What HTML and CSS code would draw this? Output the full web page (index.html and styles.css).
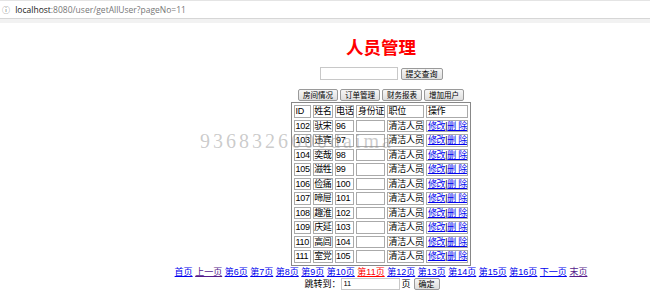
FILE: index.html
```html
<!DOCTYPE html>
<html>
<head>
<meta charset="utf-8">
<link rel="stylesheet" href="styles.css">
</head>
<body>
<div class="chrome">
  <span class="info">&#9432;</span>
  <span class="host">localhost</span><span class="path">:8080/user/getAllUser?pageNo=11</span>
</div>
<div class="chrome-gap"></div>
<div class="page">
  <h1 class="title">人员管理</h1>
  <form class="search">
    <input class="search-input" type="text"><button class="btn" type="button">提交查询</button>
  </form>
  <div class="menu">
    <button class="btn" type="button">房间情况</button>
    <button class="btn" type="button">订单管理</button>
    <button class="btn" type="button">财务报表</button>
    <button class="btn" type="button">增加用户</button>
  </div>
  <table class="users">
    <tr><td>ID</td><td>姓名</td><td>电话</td><td>身份证</td><td>职位</td><td>操作</td></tr>
    <tr><td>102</td><td>驮宋</td><td>96</td><td></td><td>清洁人员</td><td><a href="#">修改</a>|<a href="#">删 除</a></td></tr>
    <tr><td>103</td><td>违宾</td><td>97</td><td></td><td>清洁人员</td><td><a href="#">修改</a>|<a href="#">删 除</a></td></tr>
    <tr><td>104</td><td>奕哉</td><td>98</td><td></td><td>清洁人员</td><td><a href="#">修改</a>|<a href="#">删 除</a></td></tr>
    <tr><td>105</td><td>滋牲</td><td>99</td><td></td><td>清洁人员</td><td><a href="#">修改</a>|<a href="#">删 除</a></td></tr>
    <tr><td>106</td><td>俭痛</td><td>100</td><td></td><td>清洁人员</td><td><a href="#">修改</a>|<a href="#">删 除</a></td></tr>
    <tr><td>107</td><td>啼屉</td><td>101</td><td></td><td>清洁人员</td><td><a href="#">修改</a>|<a href="#">删 除</a></td></tr>
    <tr><td>108</td><td>趣淮</td><td>102</td><td></td><td>清洁人员</td><td><a href="#">修改</a>|<a href="#">删 除</a></td></tr>
    <tr><td>109</td><td>庆延</td><td>103</td><td></td><td>清洁人员</td><td><a href="#">修改</a>|<a href="#">删 除</a></td></tr>
    <tr><td>110</td><td>高闾</td><td>104</td><td></td><td>清洁人员</td><td><a href="#">修改</a>|<a href="#">删 除</a></td></tr>
    <tr><td>111</td><td>室党</td><td>105</td><td></td><td>清洁人员</td><td><a href="#">修改</a>|<a href="#">删 除</a></td></tr>
  </table>
  <div class="pager">
    <a href="#">首页</a> <a class="visited" href="#">上一页</a> <a href="#">第6页</a> <a href="#">第7页</a> <a href="#">第8页</a> <a href="#">第9页</a> <a href="#">第10页</a> <a class="current" href="#">第11页</a> <a href="#">第12页</a> <a href="#">第13页</a> <a href="#">第14页</a> <a href="#">第15页</a> <a href="#">第16页</a> <a href="#">下一页</a> <a class="visited" href="#">末页</a>
  </div>
  <div class="jump">
    跳转到：<input class="jump-input" type="text" value="11">页<button class="btn" type="button">确定</button>
  </div>
</div>
<div class="watermark">9368326600daima</div>
</body>
</html>
```

FILE: styles.css
```css
html, body {
  margin: 0;
  padding: 0;
  background: #fff;
  overflow: hidden;
}
body {
  font-family: "Liberation Sans", Arial, "Noto Sans CJK SC", sans-serif;
  font-size: 9px;
  color: #000;
  position: relative;
  height: 295px;
  width: 650px;
}
.chrome {
  height: 17px;
  line-height: 17px;
  border-top: 1px solid #e4e4e4;
  border-bottom: 1px solid #d6d6d6;
  background: #fff;
  font-family: "Open Sans", "Noto Sans CJK SC", sans-serif;
  font-size: 8.5px;
  padding-left: 2px;
  white-space: nowrap;
}
.info {
  color: #777;
  font-size: 8px;
  margin-right: 3px;
}
.host {
  color: #222;
}
.path {
  color: #777;
}
.chrome-gap {
  height: 4px;
  background: #f2f2f2;
}
.page {
  width: 746px;
  margin: 0 8px;
  text-align: center;
}
.title {
  margin: 14px 0 0;
  font-size: 17.5px;
  line-height: 20px;
  color: #ff0000;
  font-weight: bold;
  font-family: "Noto Sans CJK SC", sans-serif;
}
.search {
  margin: 10px 0 0;
  display: flex;
  justify-content: center;
  align-items: center;
  gap: 3px;
  height: 13px;
}
.search-input {
  width: 76px;
  height: 11px;
  border: 1px solid #c8c8c8;
  padding: 0;
  margin: 0;
}
.btn {
  font-family: "Noto Sans CJK SC", sans-serif;
  font-size: 8px;
  line-height: 10px;
  height: 12px;
  padding: 0 4px;
  margin: 0;
  border: 1px solid #9a9a9a;
  border-radius: 2px;
  background: linear-gradient(#f6f6f6, #dedede);
  color: #000;
}
.menu {
  margin: 9px 0 0;
  display: flex;
  justify-content: center;
  gap: 2px;
  height: 12px;
}
.menu .btn {
  font-size: 7.5px;
  padding: 0 4px;
}
.users {
  margin: 1px auto 0;
  border: 1px solid #888;
  border-spacing: 2px;
  text-align: left;
  font-size: 9px;
  letter-spacing: -0.3px;
}
.users td {
  border: 1px solid #aaa;
  padding: 0 0 0 0.5px;
  height: 10.5px;
  line-height: 10.5px;
  white-space: nowrap;
}
a {
  color: #0000ee;
}
a.visited {
  color: #551a8b;
}
a.current {
  color: #ff0000;
}
.pager {
  margin-top: 1px;
  font-size: 9px;
  line-height: 11px;
  white-space: nowrap;
}
.jump {
  display: flex;
  justify-content: center;
  align-items: center;
  height: 12px;
  font-size: 9px;
  font-family: "Noto Sans CJK SC", sans-serif;
  padding-right: 18px;
}
.jump-input {
  width: 53px;
  height: 10px;
  padding: 0 2px;
  margin: 0 2px 0 0;
  border: 1px solid #c8c8c8;
  font-size: 7.5px;
  font-family: "Liberation Sans", Arial, sans-serif;
}
.jump .btn {
  margin-left: 3px;
}
.watermark {
  position: absolute;
  left: 200px;
  top: 130px;
  font-family: "Liberation Serif", "Times New Roman", serif;
  font-size: 20px;
  letter-spacing: 3px;
  color: rgba(140, 140, 140, 0.45);
  pointer-events: none;
  white-space: nowrap;
}
```
